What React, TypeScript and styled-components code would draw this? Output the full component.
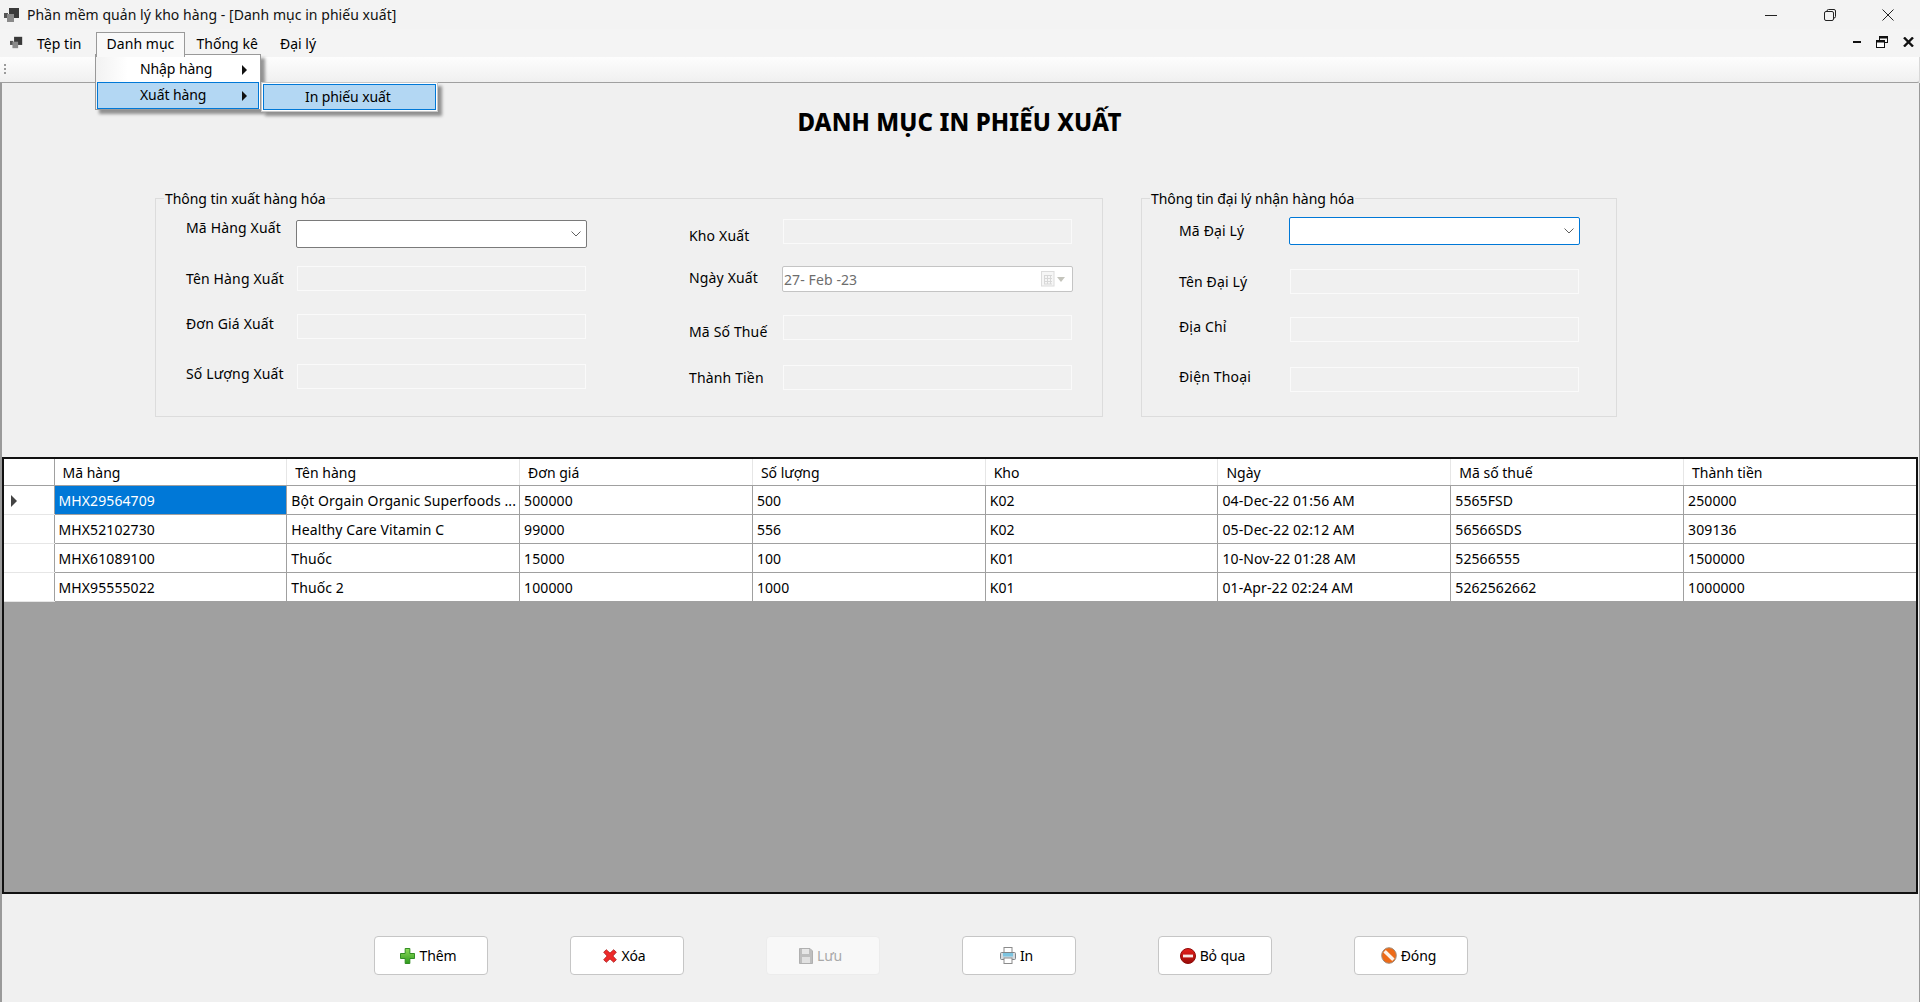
import React from "react";
import styled, { createGlobalStyle } from "styled-components";

const GlobalStyle = createGlobalStyle`
    html, body {
        margin: 0;
        padding: 0;
        background: #f0f0f0;
    }
    * {
        box-sizing: border-box;
    }
`;

const columns = ["Mã hàng", "Tên hàng", "Đơn giá", "Số lượng", "Kho", "Ngày", "Mã số thuế", "Thành tiền"];

const rows = [
    ["MHX29564709", "Bột Orgain Organic Superfoods ...", "500000", "500", "K02", "04-Dec-22 01:56 AM", "5565FSD", "250000"],
    ["MHX52102730", "Healthy Care Vitamin C", "99000", "556", "K02", "05-Dec-22 02:12 AM", "56566SDS", "309136"],
    ["MHX61089100", "Thuốc", "15000", "100", "K01", "10-Nov-22 01:28 AM", "52566555", "1500000"],
    ["MHX95555022", "Thuốc 2", "100000", "1000", "K01", "01-Apr-22 02:24 AM", "5262562662", "1000000"],
];

const AppIcon = ({ size }: { size: number }) => (
    <svg width={size} height={size} viewBox="0 0 16 16">
        <rect x="0" y="6" width="4" height="5" fill="#555" />
        <rect x="5" y="1" width="10" height="10" fill="#3a3a3a" />
        <rect x="3" y="7" width="7" height="8" fill="#8a8a8a" />
    </svg>
);

const Chevron = () => (
    <svg width="10" height="6" viewBox="0 0 10 6">
        <path d="M0.5 0.5 L5 5 L9.5 0.5" fill="none" stroke="#606060" strokeWidth="1" />
    </svg>
);

const CalendarIcon = () => (
    <svg width="14" height="16" viewBox="0 0 14 16">
        <rect x="0.5" y="0.5" width="12.5" height="14.5" fill="#f6f6f6" stroke="#dcdcdc" />
        <path d="M3 4.5H11M3 7.5H11M3 10.5H11M3 13H11M3.5 4V13M6.5 4V13M9.5 4V13" stroke="#d8d8d8" strokeWidth="1" fill="none" />
    </svg>
);

const PlusIcon = () => (
    <svg width="15" height="16" viewBox="0 0 16 16" preserveAspectRatio="none">
        <defs>
            <linearGradient id="plusFill" x1="0" y1="0" x2="0" y2="1">
                <stop offset="0" stopColor="#8fdc5a" />
                <stop offset="1" stopColor="#2c9a1c" />
            </linearGradient>
        </defs>
        <path d="M5.5 0.5H10.5V5.5H15.5V10.5H10.5V15.5H5.5V10.5H0.5V5.5H5.5Z" fill="url(#plusFill)" stroke="#2d8a1f" />
    </svg>
);

const CrossIcon = () => (
    <svg width="14" height="14" viewBox="0 0 15 15">
        <path d="M3.5 0.7L7.5 4.4L11.5 0.7L14.3 3.5L10.6 7.5L14.3 11.5L11.5 14.3L7.5 10.6L3.5 14.3L0.7 11.5L4.4 7.5L0.7 3.5Z" fill="#ee2a2a" stroke="#a81818" strokeWidth="0.8" />
    </svg>
);

const SaveIcon = () => (
    <svg width="14" height="16" viewBox="0 0 14 16">
        <path d="M0.5 0.5H11L13.5 3V15.5H0.5Z" fill="#b4b4b4" stroke="#a4a4a4" />
        <rect x="3" y="1" width="7" height="5" fill="#e4e4e4" />
        <rect x="3" y="9" width="8" height="6" fill="#dedede" />
    </svg>
);

const PrinterIcon = () => (
    <svg width="16" height="17" viewBox="0 0 16 17">
        <rect x="4" y="0.5" width="8" height="5" fill="#fff" stroke="#8b8b8b" />
        <rect x="0.5" y="5.5" width="15" height="7" rx="1" fill="#d7dde2" stroke="#7f8488" />
        <rect x="3" y="6" width="10" height="3.5" fill="#7cc4e0" />
        <rect x="4" y="11" width="8" height="5.5" fill="#fff" stroke="#8b8b8b" />
    </svg>
);

const StopIcon = () => (
    <svg width="16" height="16" viewBox="0 0 16 16">
        <defs>
            <linearGradient id="stopFill" x1="0" y1="0" x2="0" y2="1">
                <stop offset="0" stopColor="#e8201c" />
                <stop offset="1" stopColor="#980b08" />
            </linearGradient>
        </defs>
        <circle cx="8" cy="8" r="7.5" fill="url(#stopFill)" stroke="#8e0a08" />
        <rect x="3" y="6.6" width="10" height="2.8" fill="#f7e9e6" />
    </svg>
);

const BanIcon = () => (
    <svg width="16" height="17" viewBox="0 0 16 17">
        <ellipse cx="8" cy="8.5" rx="7.3" ry="7.8" fill="#ee6a16" stroke="#a08d7c" strokeWidth="1" />
        <path d="M3.6 4.2L12.4 12.8" stroke="#fbf3ea" strokeWidth="3.4" />
    </svg>
);

const Field = ({ label, top, dy, left, children }: {
    label: string;
    top: number;
    dy: number;
    left: number;
    children: React.ReactNode;
}) => (
    <FieldRow $top={top}>
        <FieldLabel $dy={dy} $width={left}>{label}</FieldLabel>
        {children}
    </FieldRow>
);

const Combo = ({ focused }: { focused?: boolean }) => (
    <ComboBox $focused={focused}>
        <Chevron />
    </ComboBox>
);

export default function App() {
    return (
        <Shell>
            <GlobalStyle />
            <TitleBar>
                <AppIcon size={16} />
                <TitleText>Phần mềm quản lý kho hàng - [Danh mục in phiếu xuất]</TitleText>
                <WindowControls>
                    <svg width="12" height="12" viewBox="0 0 12 12">
                        <path d="M0 6.5H12" stroke="#222" strokeWidth="1" />
                    </svg>
                    <svg width="12" height="12" viewBox="0 0 12 12">
                        <rect x="0.5" y="2.5" width="9" height="9" rx="1.5" fill="none" stroke="#222" />
                        <path d="M3 2.5V2A1.5 1.5 0 0 1 4.5 0.5H10A1.5 1.5 0 0 1 11.5 2V7.5A1.5 1.5 0 0 1 10 9" fill="none" stroke="#222" />
                    </svg>
                    <svg width="12" height="12" viewBox="0 0 12 12">
                        <path d="M0.5 0.5L11.5 11.5M11.5 0.5L0.5 11.5" stroke="#222" strokeWidth="1" />
                    </svg>
                </WindowControls>
            </TitleBar>

            <MenuBar>
                <MenuIcon>
                    <AppIcon size={13} />
                </MenuIcon>
                <MenuItem $first>Tệp tin</MenuItem>
                <MenuItem $open>Danh mục</MenuItem>
                <MenuItem>Thống kê</MenuItem>
                <MenuItem>Đại lý</MenuItem>
                <ChildControls>
                    <svg width="8" height="4" viewBox="0 0 8 4">
                        <rect y="1" width="8" height="2" fill="#111" />
                    </svg>
                    <svg width="12" height="12" viewBox="0 0 12 12">
                        <rect x="3.5" y="0.5" width="8" height="6" fill="none" stroke="#111" />
                        <rect x="3.5" y="0.5" width="8" height="2" fill="#111" />
                        <rect x="0.5" y="4.5" width="8" height="7" fill="#fff" stroke="#111" />
                        <rect x="0.5" y="4.5" width="8" height="2" fill="#111" />
                    </svg>
                    <svg width="11" height="10" viewBox="0 0 11 10">
                        <path d="M1 0.5L10 9.5M10 0.5L1 9.5" stroke="#111" strokeWidth="2.4" />
                    </svg>
                </ChildControls>
            </MenuBar>

            <ToolStrip>
                <Grip />
            </ToolStrip>

            <Dropdown>
                <DropRow>
                    <DropLabel>Nhập hàng</DropLabel>
                    <DropArrow />
                </DropRow>
                <DropRow $active>
                    <DropLabel>Xuất hàng</DropLabel>
                    <DropArrow />
                </DropRow>
            </Dropdown>
            <SubMenu>
                <SubRow>In phiếu xuất</SubRow>
            </SubMenu>

            <Content>
                <Heading>DANH MỤC IN PHIẾU XUẤT</Heading>

                <Groups>
                    <Group $width={948}>
                        <Legend>Thông tin xuất hàng hóa</Legend>
                        <GroupBody>
                            <FieldColumn $left={30} $width={430}>
                                <Field label="Mã Hàng Xuất" top={11} dy={-2} left={110}><Combo /></Field>
                                <Field label="Tên Hàng Xuất" top={18} dy={3} left={111}><TextBox /></Field>
                                <Field label="Đơn Giá Xuất" top={23} dy={0} left={111}><TextBox /></Field>
                                <Field label="Số Lượng Xuất" top={25} dy={0} left={111}><TextBox /></Field>
                            </FieldColumn>
                            <FieldColumn $left={73} $width={383}>
                                <Field label="Kho Xuất" top={10} dy={7} left={94}><TextBox /></Field>
                                <Field label="Ngày Xuất" top={22} dy={2} left={93}>
                                    <DateBox>
                                        <DateValue>27- Feb -23</DateValue>
                                        <CalendarIcon />
                                        <DateArrow />
                                    </DateBox>
                                </Field>
                                <Field label="Mã Số Thuế" top={23} dy={7} left={94}><TextBox /></Field>
                                <Field label="Thành Tiền" top={25} dy={3} left={94}><TextBox /></Field>
                            </FieldColumn>
                        </GroupBody>
                    </Group>
                    <Group $width={476}>
                        <Legend>Thông tin đại lý nhận hàng hóa</Legend>
                        <GroupBody>
                            <FieldColumn $left={37} $width={430}>
                                <Field label="Mã Đại Lý" top={8} dy={4} left={110}><Combo focused /></Field>
                                <Field label="Tên Đại Lý" top={24} dy={3} left={111}><TextBox /></Field>
                                <Field label="Địa Chỉ" top={23} dy={0} left={111}><TextBox /></Field>
                                <Field label="Điện Thoại" top={25} dy={0} left={111}><TextBox /></Field>
                            </FieldColumn>
                        </GroupBody>
                    </Group>
                </Groups>

                <GridFrame>
                    <DataTable>
                        <colgroup>
                            <RowHeadCol />
                            {columns.map((c) => <DataCol key={c} />)}
                        </colgroup>
                        <thead>
                            <tr>
                                <CornerCell />
                                {columns.map((c) => <HeadCell key={c}>{c}</HeadCell>)}
                            </tr>
                        </thead>
                        <tbody>
                            {rows.map((row, i) => (
                                <tr key={row[0]}>
                                    <RowHead>{i === 0 && <RowPointer />}</RowHead>
                                    {row.map((value, j) => (
                                        <Cell key={j} $selected={i === 0 && j === 0}>{value}</Cell>
                                    ))}
                                </tr>
                            ))}
                        </tbody>
                    </DataTable>
                </GridFrame>

                <ButtonBar>
                    <ActionButton><PlusIcon />Thêm</ActionButton>
                    <ActionButton><CrossIcon />Xóa</ActionButton>
                    <ActionButton $disabled><SaveIcon />Lưu</ActionButton>
                    <ActionButton><PrinterIcon />In</ActionButton>
                    <ActionButton><StopIcon />Bỏ qua</ActionButton>
                    <ActionButton><BanIcon />Đóng</ActionButton>
                </ButtonBar>
            </Content>
        </Shell>
    );
}

const uiFont = `"Noto Sans", "Open Sans", sans-serif`;

const Shell = styled.div`
    position: relative;
    display: flex;
    flex-direction: column;
    width: 1920px;
    height: 1002px;
    overflow: hidden;
    background: #f0f0f0;
    color: #000;
    font-family: ${uiFont};
    font-size: 14px;
    letter-spacing: -0.1px;
`;

const TitleBar = styled.div`
    display: flex;
    align-items: center;
    flex: 0 0 29px;
    padding-left: 4px;
    background: #f3f3f3;
`;

const TitleText = styled.span`
    margin-left: 7px;
    color: #111;
    letter-spacing: 0.05px;
`;

const WindowControls = styled.div`
    display: flex;
    align-items: center;
    gap: 46.5px;
    margin-left: auto;
    padding-right: 26px;
`;

const MenuBar = styled.div`
    display: flex;
    align-items: center;
    flex: 0 0 28px;
    padding-left: 10px;
    background: #f4f4f4;
`;

const MenuIcon = styled.span`
    display: flex;
    width: 15px;
    margin-top: -2px;
`;

const MenuItem = styled.div<{ $open?: boolean; $first?: boolean }>`
    position: relative;
    z-index: 3;
    height: 25px;
    margin-top: 3px;
    padding: 0 ${(p) => (p.$first ? "13px" : "10px")} 0 ${(p) => (p.$first ? "11px" : "10px")};
    line-height: 21px;
    letter-spacing: 0.04px;
    border: 1px solid ${(p) => (p.$open ? "#999" : "transparent")};
    border-bottom: 0;
    background: ${(p) => (p.$open ? "#f9f9f9" : "transparent")};
`;

const ChildControls = styled.div`
    display: flex;
    align-items: center;
    gap: 15px;
    margin-left: auto;
    margin-top: -2px;
    padding-right: 6px;
`;

const ToolStrip = styled.div`
    display: flex;
    align-items: center;
    flex: 0 0 26px;
    padding-left: 4px;
    background: linear-gradient(#fdfdfd, #f0f0f0);
    border-bottom: 1px solid #a0a0a0;
    border-right: 1px solid #d8d8d8;
    border-bottom-right-radius: 3px;
`;

const Grip = styled.div`
    width: 2px;
    height: 11px;
    background: repeating-linear-gradient(#9a9a9a 0 2px, transparent 2px 4px);
`;

const Dropdown = styled.div`
    position: absolute;
    z-index: 2;
    left: 95px;
    top: 54px;
    width: 166px;
    height: 56px;
    padding: 2px 1px;
    background: linear-gradient(90deg, #f2f2f2, #fff 32px);
    border: 1px solid #999;
    box-shadow: 4px 4px 3px rgba(0, 0, 0, 0.4);
`;

const DropRow = styled.div<{ $active?: boolean }>`
    display: flex;
    align-items: center;
    height: ${(p) => (p.$active ? "27px" : "25px")};
    padding-left: 42px;
    background: ${(p) => (p.$active ? "#b3d7f3" : "transparent")};
    border: 1px solid ${(p) => (p.$active ? "#0078d7" : "transparent")};
`;

const DropLabel = styled.span`
    flex: 1;
    margin-top: -2px;
`;

const DropArrow = styled.i`
    width: 0;
    height: 0;
    margin-right: 11px;
    border-left: 5px solid #111;
    border-top: 5px solid transparent;
    border-bottom: 5px solid transparent;
`;

const SubMenu = styled.div`
    position: absolute;
    z-index: 2;
    left: 261px;
    top: 82px;
    width: 177px;
    height: 30px;
    padding: 1px;
    background: #fff;
    border: 1px solid #c8c8c8;
    box-shadow: 4px 4px 3px rgba(0, 0, 0, 0.4);
`;

const SubRow = styled.div`
    height: 26px;
    padding-left: 41px;
    line-height: 24px;
    background: #b3d7f3;
    border: 1px solid #0078d7;
`;

const Content = styled.div`
    display: flex;
    flex: 1;
    flex-direction: column;
    min-height: 0;
    border-left: 2px solid #9a9a9a;
    border-right: 1px solid #9a9a9a;
`;

const Heading = styled.h1`
    height: 104px;
    margin: 0;
    padding: 23px 2px 0 0;
    text-align: center;
    font-family: ${uiFont};
    font-size: 24px;
    font-weight: 800;
    line-height: 32px;
    letter-spacing: 0.1px;
`;

const Groups = styled.div`
    display: flex;
    gap: 38px;
    height: 230px;
    padding-left: 153px;
`;

const Group = styled.fieldset<{ $width: number }>`
    width: ${(p) => p.$width}px;
    margin: 0;
    padding: 0;
    border: 1px solid #dcdcdc;
`;

const Legend = styled.legend`
    margin-left: 8px;
    padding: 2px 1px 0;
    line-height: 20px;
    letter-spacing: -0.05px;
`;

const GroupBody = styled.div`
    display: flex;
`;

const FieldColumn = styled.div<{ $left: number; $width: number }>`
    flex: 0 0 ${(p) => p.$left + p.$width}px;
    padding-left: ${(p) => p.$left}px;
`;

const FieldRow = styled.div<{ $top: number }>`
    display: flex;
    align-items: flex-start;
    margin-top: ${(p) => p.$top}px;
`;

const FieldLabel = styled.label<{ $dy: number; $width: number }>`
    flex: 0 0 ${(p) => p.$width}px;
    margin-top: ${(p) => p.$dy}px;
    margin-bottom: ${(p) => -p.$dy}px;
    line-height: 20px;
    white-space: nowrap;
    letter-spacing: 0.15px;
`;

const TextBox = styled.div`
    width: 289px;
    height: 25px;
    background: #f0f0f0;
    border: 1px solid #fafafa;
`;

const ComboBox = styled.div<{ $focused?: boolean }>`
    display: flex;
    align-items: center;
    justify-content: flex-end;
    width: 291px;
    height: 28px;
    padding-right: 5px;
    background: #fff;
    border: 1px solid ${(p) => (p.$focused ? "#0078d7" : "#7a7a7a")};
    border-radius: 2px;
`;

const DateBox = styled.div`
    display: flex;
    align-items: center;
    width: 291px;
    height: 26px;
    padding: 0 7px 0 1px;
    background: #fff;
    border: 1px solid #c4c4c4;
    border-radius: 2px;
`;

const DateValue = styled.span`
    flex: 1;
    color: #6d6d6d;
    letter-spacing: 0.1px;
`;

const DateArrow = styled.i`
    width: 0;
    height: 0;
    margin-left: 2px;
    border-top: 5px solid #c4c4bc;
    border-left: 4.5px solid transparent;
    border-right: 4.5px solid transparent;
`;

const GridFrame = styled.div`
    flex: 0 0 437px;
    margin: 40px 1px 0 0;
    background: #a0a0a0;
    border: 2px solid #111;
    overflow: hidden;
`;

const DataTable = styled.table`
    width: 1912px;
    border-collapse: collapse;
    table-layout: fixed;
    background: #fff;
`;

const RowHeadCol = styled.col`
    width: 50px;
`;

const DataCol = styled.col`
    width: 232.8px;
`;

const HeadCell = styled.th`
    height: 26px;
    padding: 1px 0 0 8px;
    text-align: left;
    font-weight: 400;
    letter-spacing: 0;
    background: #fff;
    border-right: 1px solid #e6e6e6;
    border-bottom: 1px solid #a0a0a0;
`;

const CornerCell = styled.th`
    background: #fff;
    border-right: 1px solid #a0a0a0;
    border-bottom: 1px solid #a0a0a0;
`;

const RowHead = styled.td`
    position: relative;
    padding: 0;
    background: #fff;
    border-right: 1px solid #a0a0a0;
    border-bottom: 1px solid #e6e6e6;
`;

const RowPointer = styled.i`
    position: absolute;
    left: 7px;
    top: 9px;
    width: 0;
    height: 0;
    border-left: 6px solid #444;
    border-top: 6px solid transparent;
    border-bottom: 6px solid transparent;
`;

const Cell = styled.td<{ $selected?: boolean }>`
    height: 29px;
    padding: 1px 0 0 4px;
    white-space: nowrap;
    overflow: hidden;
    letter-spacing: 0.1px;
    color: ${(p) => (p.$selected ? "#fff" : "#000")};
    background: ${(p) => (p.$selected ? "#0078d7" : "#fff")};
    border-right: 1px solid #a0a0a0;
    border-bottom: 1px solid #a0a0a0;
`;

const ButtonBar = styled.div`
    display: flex;
    gap: 82px;
    padding: 42px 0 0 372px;
`;

const ActionButton = styled.button<{ $disabled?: boolean }>`
    display: flex;
    align-items: center;
    justify-content: center;
    gap: 4px;
    width: 114px;
    height: 39px;
    padding: 0 5px 0 0;
    font-family: ${uiFont};
    font-size: 14px;
    letter-spacing: -0.1px;
    color: ${(p) => (p.$disabled ? "#a9a9a9" : "#000")};
    background: ${(p) => (p.$disabled ? "#f8f8f8" : "#fff")};
    border: 1px solid ${(p) => (p.$disabled ? "#ececec" : "#c6c6c6")};
    border-radius: 4px;

    svg {
        opacity: ${(p) => (p.$disabled ? 0.85 : 1)};
    }
`;
